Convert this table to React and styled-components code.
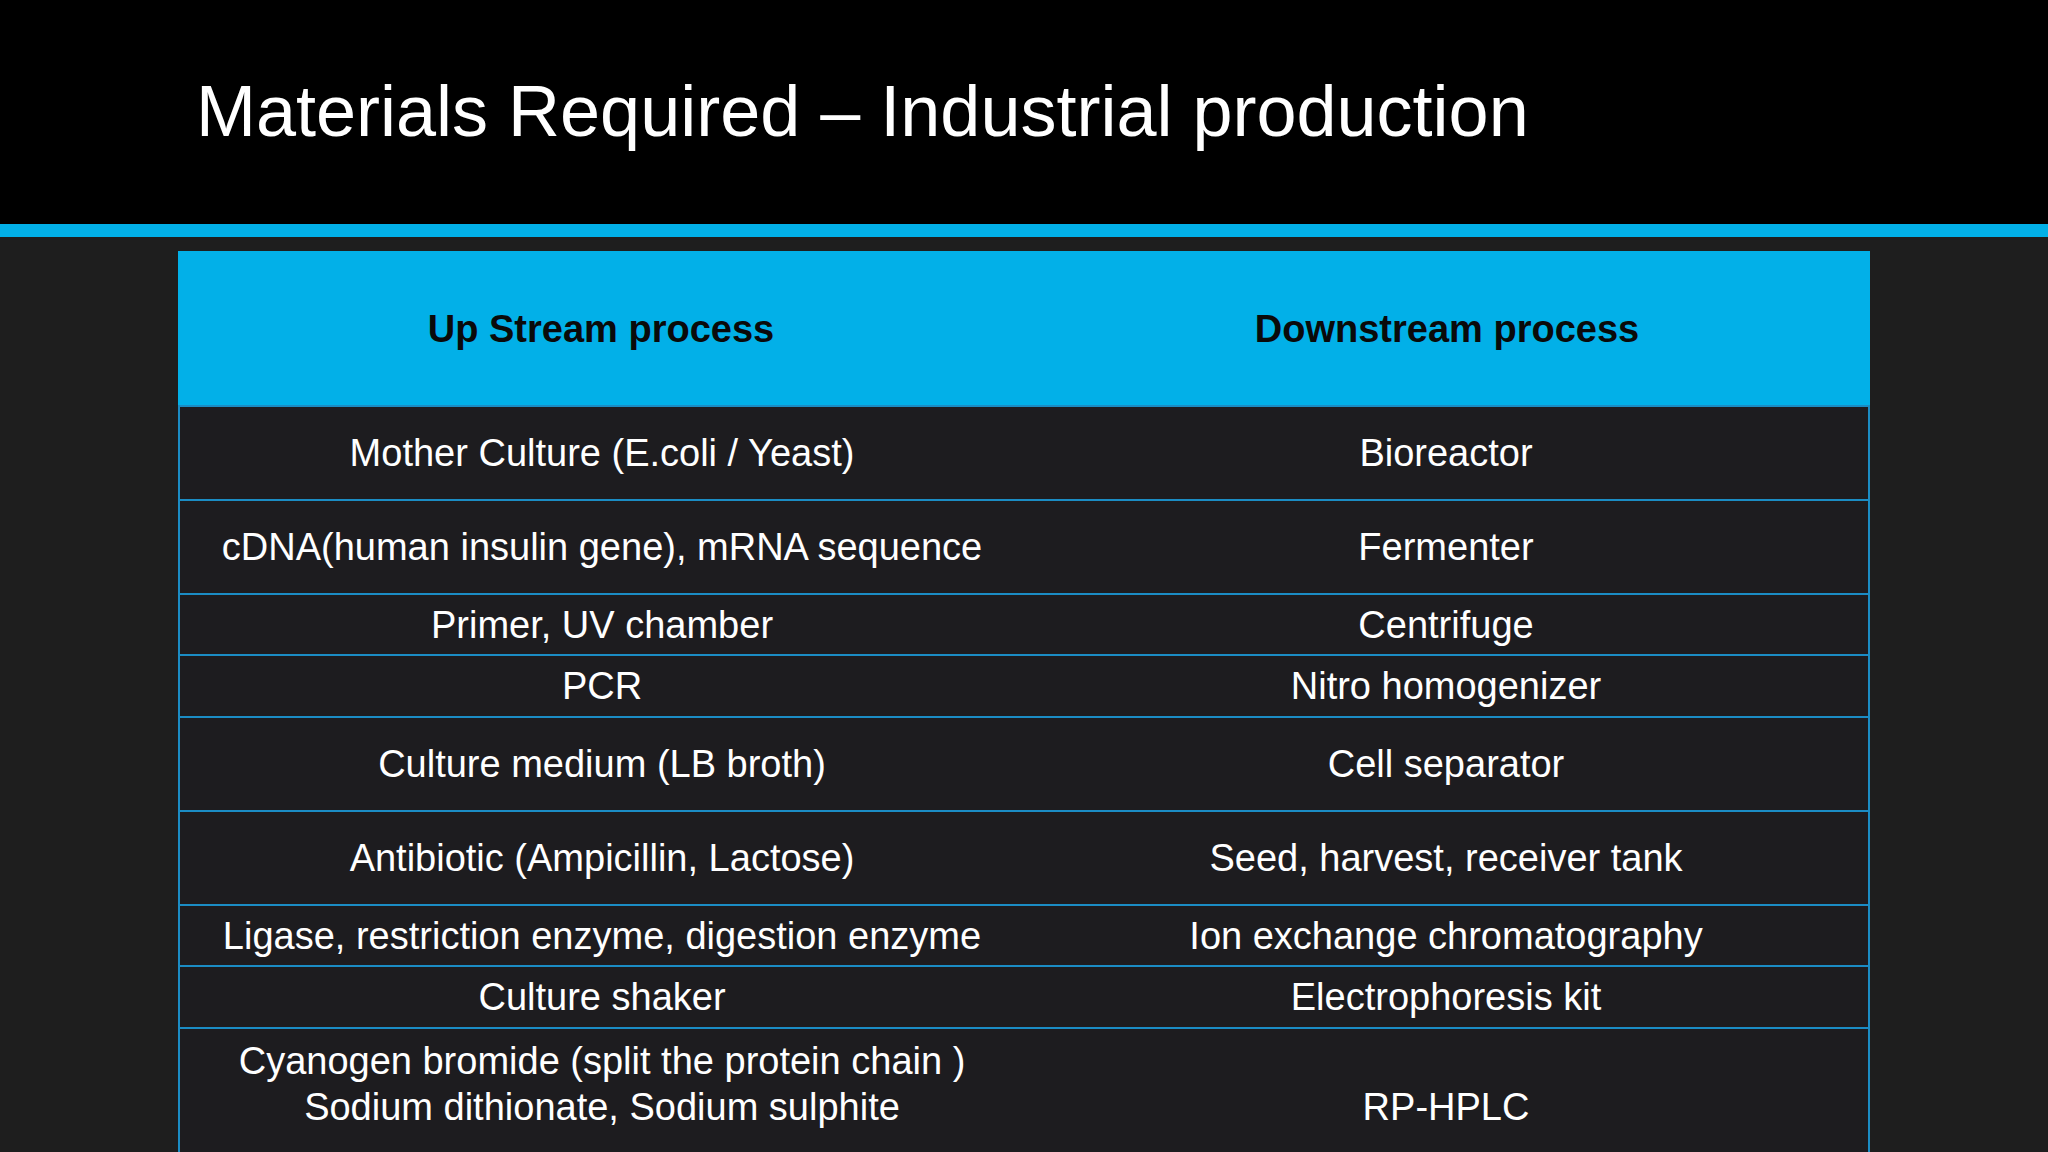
import React from 'react'
import styled, { createGlobalStyle } from 'styled-components';

const GlobalStyle = createGlobalStyle`
    html, body {
        margin: 0;
        padding: 0;
        background: #1e1e1e;
        overflow: hidden;
    }
    body {
        font-family: "Liberation Sans", Arial, sans-serif;
    }
`;

const Slide = styled.div`
    width: 2048px;
    height: 1152px;
    display: flex;
    flex-direction: column;
    background: #1e1e1e;
    overflow: hidden;
    & > * {
        flex-shrink: 0;
    }
`;

const TitleBar = styled.header`
    height: 224px;
    background: #000;
    padding: 75px 0 0 196px;
    box-sizing: border-box;
`;

const Title = styled.h1`
    margin: 0;
    font-size: 72px;
    line-height: 72px;
    font-weight: 400;
    color: #fff;
    white-space: nowrap;
`;

const Stripe = styled.div`
    height: 13px;
    background: #02b0e8;
`;

const Table = styled.div`
    margin: 14px 0 0 178px;
    width: 1692px;
    background: #1d1c1f;
    border-left: 2px solid #1b8cc4;
    border-right: 2px solid #1b8cc4;
    box-sizing: border-box;
`;

const HeaderRow = styled.div`
    display: grid;
    grid-template-columns: 1fr 1fr;
    height: 154px;
    background: #02b0e8;
    margin: 0 -2px;
`;

const HeaderCell = styled.div`
    display: flex;
    align-items: center;
    justify-content: center;
    padding-top: 2px;
    font-size: 38px;
    font-weight: 700;
    color: #0a0a0a;
`;

const Row = styled.div`
    display: grid;
    grid-template-columns: 1fr 1fr;
    height: ${p => p.$h}px;
    box-sizing: border-box;
    border-top: 2px solid #1b8cc4;
`;

const Cell = styled.div`
    display: flex;
    flex-direction: column;
    align-items: center;
    justify-content: ${p => (p.$top ? 'flex-start' : 'center')};
    padding-top: ${p => (p.$top ? '9px' : '0')};
    font-size: 38px;
    line-height: 46px;
    color: #fff;
    text-align: center;
    white-space: nowrap;
`;

const Line = styled.span`
    display: block;
`;

const rows = [
    { h: 94, up: ['Mother Culture (E.coli / Yeast)'], down: ['Bioreactor'] },
    { h: 94, up: ['cDNA(human insulin gene), mRNA sequence'], down: ['Fermenter'] },
    { h: 61, up: ['Primer, UV chamber'], down: ['Centrifuge'] },
    { h: 62, up: ['PCR'], down: ['Nitro homogenizer'] },
    { h: 94, up: ['Culture medium (LB broth)'], down: ['Cell separator'] },
    { h: 94, up: ['Antibiotic (Ampicillin, Lactose)'], down: ['Seed, harvest, receiver tank'] },
    { h: 61, up: ['Ligase, restriction enzyme, digestion enzyme'], down: ['Ion exchange chromatography'] },
    { h: 62, up: ['Culture shaker'], down: ['Electrophoresis kit'] },
    {
        h: 160,
        top: true,
        up: ['Cyanogen bromide (split the protein chain )', 'Sodium dithionate, Sodium sulphite'],
        down: ['\u00a0', 'RP-HPLC'],
    },
];

const App = () => {
    return (
        <Slide>
            <GlobalStyle />
            <TitleBar>
                <Title>Materials Required – Industrial production</Title>
            </TitleBar>
            <Stripe />
            <Table>
                <HeaderRow>
                    <HeaderCell>Up Stream process</HeaderCell>
                    <HeaderCell>Downstream process</HeaderCell>
                </HeaderRow>
                {
                    rows.map((row, index) => (
                        <Row key={index} $h={row.h}>
                            <Cell $top={row.top}>
                                {row.up.map((t, i) => <Line key={i}>{t}</Line>)}
                            </Cell>
                            <Cell $top={row.top}>
                                {row.down.map((t, i) => <Line key={i}>{t}</Line>)}
                            </Cell>
                        </Row>
                    ))
                }
            </Table>
        </Slide>
    )
}

export default App;
